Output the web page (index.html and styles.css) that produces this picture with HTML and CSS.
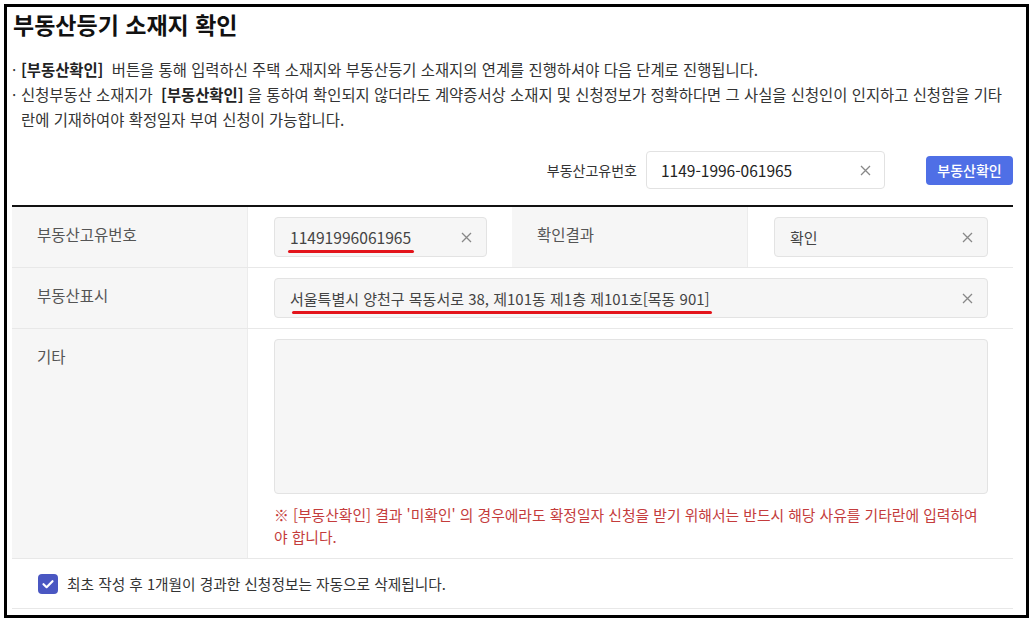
FILE: index.html
```html
<!DOCTYPE html>
<html lang="ko">
<head>
<meta charset="utf-8">
<title>부동산등기 소재지 확인</title>
<link rel="stylesheet" href="styles.css">
</head>
<body>
<div class="frame">
  <h1 class="title">부동산등기 소재지 확인</h1>
  <ul class="notes">
    <li><b class="lead">[부동산확인]</b> 버튼을 통해 입력하신 주택 소재지와 부동산등기 소재지의 연계를 진행하셔야 다음 단계로 진행됩니다.</li>
    <li>신청부동산 소재지가 <b class="mid">[부동산확인]</b> 을 통하여 확인되지 않더라도 계약증서상 소재지 및 신청정보가 정확하다면 그 사실을 신청인이 인지하고 신청함을 기타란에 기재하여야 확정일자 부여 신청이 가능합니다.</li>
  </ul>
  <div class="search">
    <span class="search-label">부동산고유번호</span>
    <div class="search-input"><span class="val">1149-1996-061965</span><svg class="x" viewBox="0 0 11 11" width="11" height="11"><path d="M1 1 L10 10 M10 1 L1 10" stroke="#888" stroke-width="1.3" fill="none"/></svg></div>
    <button class="btn">부동산확인</button>
  </div>
  <div class="table">
    <div class="row">
      <div class="th">부동산고유번호</div>
      <div class="td"><div class="field w-small num"><span class="val mark">11491996061965</span><svg class="x" viewBox="0 0 11 11" width="11" height="11"><path d="M1 1 L10 10 M10 1 L1 10" stroke="#888" stroke-width="1.3" fill="none"/></svg></div></div>
      <div class="th">확인결과</div>
      <div class="td"><div class="field w-small"><span class="val">확인</span><svg class="x" viewBox="0 0 11 11" width="11" height="11"><path d="M1 1 L10 10 M10 1 L1 10" stroke="#888" stroke-width="1.3" fill="none"/></svg></div></div>
    </div>
    <div class="row">
      <div class="th">부동산표시</div>
      <div class="td wide"><div class="field"><span class="val mark mark2">서울특별시 양천구 목동서로 38, 제101동 제1층 제101호[목동 901]</span><svg class="x" viewBox="0 0 11 11" width="11" height="11"><path d="M1 1 L10 10 M10 1 L1 10" stroke="#888" stroke-width="1.3" fill="none"/></svg></div></div>
    </div>
    <div class="row">
      <div class="th">기타</div>
      <div class="td wide etc">
        <div class="textarea"></div>
        <p class="warn">※ [부동산확인] 결과 '미확인' 의 경우에라도 확정일자 신청을 받기 위해서는 반드시 해당 사유를 기타란에 입력하여야 합니다.</p>
      </div>
    </div>
  </div>
  <div class="agree">
    <span class="check"><svg viewBox="0 0 20 20" width="20" height="20"><path d="M5.5 10.2 L8.6 13.2 L14.5 7.2" fill="none" stroke="#fff" stroke-width="2.2" stroke-linecap="round" stroke-linejoin="round"/></svg></span>
    <span class="agree-text">최초 작성 후 1개월이 경과한 신청정보는 자동으로 삭제됩니다.</span>
  </div>
</div>
</body>
</html>
```
FILE: styles.css
```css
* { box-sizing: border-box; }
html, body { margin: 0; padding: 0; background: #fff; }
body {
  font-family: "Noto Sans CJK KR", "Noto Sans", sans-serif;
  color: #333;
}
.frame {
  margin: 4px;
  width: 1025px;
  height: 614px;
  border: 3px solid #000;
  padding: 0 13px 0 5px;
  overflow: hidden;
}
.title {
  margin: 0;
  padding: 0 0 0 1px;
  font-size: 23px;
  line-height: 34px;
  font-weight: 700;
  color: #111;
}
.notes {
  list-style: none;
  margin: 16px 0 0 0;
  padding: 0;
  font-size: 15.4px;
  line-height: 25px;
  color: #333;
}
.notes li {
  padding-left: 9px;
  position: relative;
}
.notes li::before {
  content: "·";
  position: absolute;
  left: 0;
  top: 0;
}
.notes b { font-weight: 700; color: #222; }
.notes b.lead { margin-right: 4px; }
.notes b.mid { margin-left: 4px; }
.search {
  display: flex;
  justify-content: flex-end;
  align-items: center;
  margin-top: 19px;
  height: 38px;
}
.search-label {
  font-size: 14px;
  color: #333;
  margin-right: 9px;
}
.search-input {
  width: 239px;
  height: 38px;
  border: 1px solid #e2e2e2;
  border-radius: 4px;
  background: #fff;
  display: flex;
  align-items: center;
  justify-content: space-between;
  padding: 0 13px 0 14px;
  font-size: 15.5px;
  color: #222;
}
.btn {
  margin-left: 41px;
  width: 87px;
  height: 29px;
  border: 0;
  border-radius: 4px;
  background: #4f6fe6;
  color: #fff;
  font-family: inherit;
  font-size: 14px;
  font-weight: 500;
  padding: 0;
}
.x { display: block; flex: none; }
.table {
  margin-top: 16px;
  border-top: 2px solid #111;
}
.row {
  display: grid;
  grid-template-columns: 235px 265px 235px 266px;
  border-bottom: 1px solid #e8e8e8;
}
.th {
  background: #f6f6f6;
  padding: 17px 25px 0;
  font-size: 15.5px;
  line-height: 20px;
  color: #555;
}
.th + .td { border-left: 1px solid #ececec; }
.td {
  padding: 10px 25px 10px 26px;
}
.td.wide { grid-column: span 3; }
.field {
  height: 40px;
  border: 1px solid #e3e3e3;
  border-radius: 4px;
  background: #f6f6f6;
  display: flex;
  align-items: center;
  justify-content: space-between;
  padding: 0 14px 0 15px;
  font-size: 15px;
  color: #444;
}
.field.num { font-size: 15.6px; }
.mark { position: relative; }
.mark::after {
  content: "";
  position: absolute;
  left: -2px;
  right: -3px;
  bottom: -5px;
  height: 3px;
  border-radius: 2px;
  background: #e3141b;
}
.mark2::after { left: 2px; right: -2px; }
.etc { padding-bottom: 10px; }
.textarea {
  height: 155px;
  border: 1px solid #e3e3e3;
  border-radius: 4px;
  background: #f6f6f6;
}
.warn {
  margin: 10px 0 0;
  font-size: 14.8px;
  line-height: 22px;
  color: #c43c3c;
}
.agree {
  display: flex;
  align-items: center;
  height: 50px;
  padding-left: 26px;
  border-bottom: 1px solid #e8e8e8;
}
.check {
  width: 20px;
  height: 20px;
  border-radius: 4px;
  background: #4a57c2;
  display: flex;
  margin-right: 9px;
}
.agree-text { font-size: 14.7px; color: #333; }
```
